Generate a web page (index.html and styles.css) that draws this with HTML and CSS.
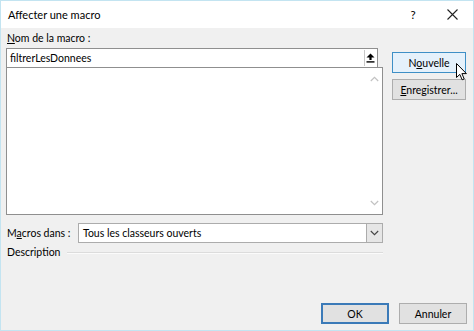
FILE: index.html
```html
<!DOCTYPE html>
<html lang="fr">
<head>
    <meta charset="UTF-8">
    <title>Affecter une macro</title>
    <link rel="stylesheet" href="styles.css">
</head>
<body>
    <div class="dialog">
        <div class="titlebar">
            <span class="title">Affecter une macro</span>
            <span class="help">?</span>
            <span class="close">
                <svg width="11" height="11" viewBox="0 0 11 11"><path d="M0.5 0.5 L10.5 10.5 M10.5 0.5 L0.5 10.5" stroke="#222" stroke-width="1.1" fill="none"/></svg>
            </span>
        </div>

        <div class="content">
            <div class="main">
                <div class="left">
                    <div class="field-label"><u>N</u>om de la macro :</div>
                    <div class="name-input">
                        <span class="name-value">filtrerLesDonnees</span>
                        <span class="collapse-btn">
                            <svg width="9" height="10" viewBox="0 0 9 10"><path d="M4.5 0.5 L8.5 4.5 L5.6 4.5 L5.6 7 L3.4 7 L3.4 4.5 L0.5 4.5 Z" fill="#000"/><rect x="0.5" y="8.2" width="8" height="1.4" fill="#000"/></svg>
                        </span>
                    </div>
                    <div class="macro-list">
                        <div class="scrollbar">
                            <svg width="9" height="6" viewBox="0 0 9 6"><path d="M0.8 5 L4.5 1.3 L8.2 5" stroke="#c2c2c2" stroke-width="1.2" fill="none"/></svg>
                            <svg width="9" height="6" viewBox="0 0 9 6"><path d="M0.8 1 L4.5 4.7 L8.2 1" stroke="#c2c2c2" stroke-width="1.2" fill="none"/></svg>
                        </div>
                    </div>
                    <div class="macros-in">
                        <span class="row-label">M<u>a</u>cros dans :</span>
                        <div class="select">
                            <span class="select-value">Tous les classeurs ouverts</span>
                            <span class="drop-btn">
                                <svg width="9" height="6" viewBox="0 0 9 6"><path d="M0.8 1 L4.5 4.7 L8.2 1" stroke="#444" stroke-width="1.1" fill="none"/></svg>
                            </span>
                        </div>
                    </div>
                    <div class="description">
                        <span>Description</span>
                        <span class="rule"></span>
                    </div>
                </div>

                <div class="side">
                    <button class="btn hover">N<u>o</u>uvelle</button>
                    <button class="btn"><u>E</u>nregistrer...</button>
                </div>
            </div>

            <div class="footer">
                <button class="btn default">OK</button>
                <button class="btn">Annuler</button>
            </div>
        </div>

        <svg class="cursor" width="12" height="18" viewBox="0 0 12 18"><path d="M0.5 0.5 L0.5 14.5 L3.8 11.4 L6.2 16.8 L8.2 15.9 L5.9 10.6 L10.4 10.6 Z" fill="#fff" stroke="#000" stroke-width="1" stroke-linejoin="round"/></svg>
    </div>
</body>
</html>
```

FILE: styles.css
```css
body {
    margin: 0;
    font-family: Lato, 'Liberation Sans', sans-serif;
    font-size: 10.5px;
    color: #000;
}
.dialog {
    position: relative;
    width: 474px;
    height: 331px;
    box-sizing: border-box;
    border: 1px solid #c3e4f1;
    background: #f0f0f0;
    display: flex;
    flex-direction: column;
}
.titlebar {
    height: 27px;
    background: #fff;
    display: flex;
    align-items: center;
    padding-left: 7px;
    font-size: 11px;
}
.title {
    flex: 1;
}
.help {
    width: 12px;
    text-align: center;
    margin-right: 28px;
    font-size: 11.5px;
}
.close {
    display: flex;
    margin-right: 15px;
}
.content {
    flex: 1;
    display: flex;
    flex-direction: column;
    padding: 3px 6px 6px 5px;
}
.main {
    display: flex;
    gap: 9px;
}
.left {
    width: 377px;
}
.field-label {
    line-height: 15px;
    margin-bottom: 2px;
    padding-left: 1px;
}
.name-input {
    width: 372px;
    height: 19px;
    box-sizing: border-box;
    background: #fff;
    border: 1px solid #8f8f8f;
    border-bottom: none;
    display: flex;
    align-items: center;
    justify-content: space-between;
    padding-left: 3px;
}
.collapse-btn {
    width: 11px;
    height: 16px;
    margin-right: 1px;
    border-left: 1px solid #c8c8c8;
    display: flex;
    align-items: center;
    justify-content: center;
}
.macro-list {
    height: 148px;
    box-sizing: border-box;
    background: #fff;
    border: 1px solid #8f8f8f;
    display: flex;
    justify-content: flex-end;
}
.scrollbar {
    width: 16px;
    display: flex;
    flex-direction: column;
    align-items: center;
    justify-content: space-between;
    padding: 8px 0 8px;
}
.macros-in {
    margin-top: 8px;
    display: flex;
    align-items: center;
    height: 20px;
    padding-left: 1px;
}
.row-label {
    width: 71px;
}
.select {
    flex: 1;
    height: 20px;
    box-sizing: border-box;
    background: #fff;
    border: 1px solid #acacac;
    display: flex;
    align-items: center;
    justify-content: space-between;
    padding-left: 4px;
}
.drop-btn {
    width: 16px;
    height: 18px;
    box-sizing: border-box;
    background: #e6e6e6;
    border-left: 1px solid #acacac;
    display: flex;
    align-items: center;
    justify-content: center;
}
.description {
    margin-top: 2px;
    display: flex;
    align-items: center;
    line-height: 15px;
    padding-left: 1px;
}
.rule {
    flex: 1;
    margin-left: 7px;
    border-top: 1px solid #dcdcdc;
    border-bottom: 1px solid #fbfbfb;
}
.side {
    width: 74px;
    padding-top: 21px;
    display: flex;
    flex-direction: column;
    gap: 6px;
}
.btn {
    height: 21px;
    box-sizing: border-box;
    background: #e1e1e1;
    border: 1px solid #adadad;
    font-family: inherit;
    font-size: 10.5px;
    color: #000;
    padding: 0;
}
.btn.hover {
    background: #e5f1fb;
    border-color: #3e8fc6;
}
.btn.default {
    border: 2px solid #3b7ab8;
}
.footer {
    margin-top: auto;
    display: flex;
    justify-content: flex-end;
    gap: 10px;
}
.footer .btn {
    width: 68px;
}
.cursor {
    position: absolute;
    left: 455px;
    top: 62px;
}
```
